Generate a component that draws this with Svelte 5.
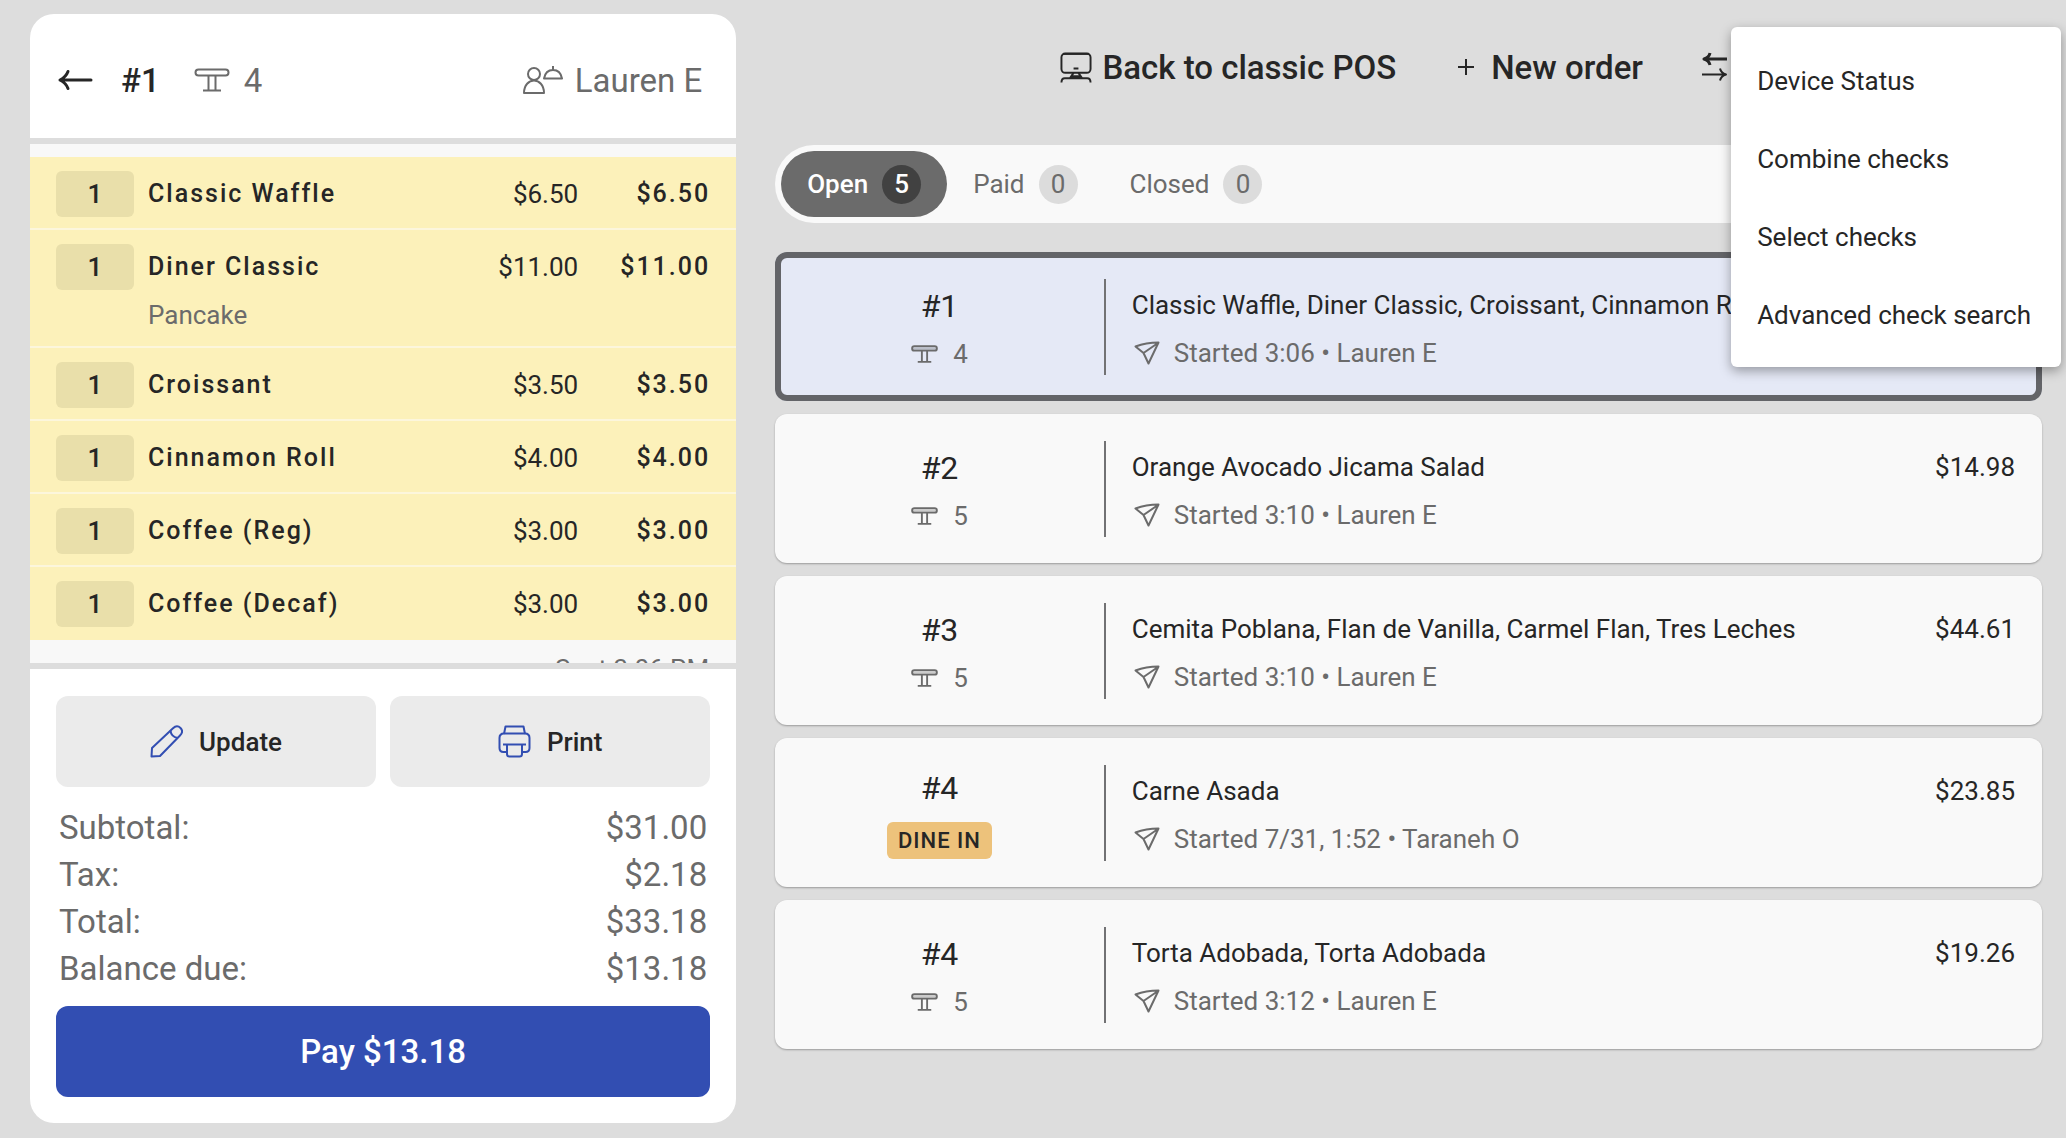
<script>
  const items = [
    { qty: 1, name: 'Classic Waffle', price: '$6.50', total: '$6.50' },
    { qty: 1, name: 'Diner Classic', price: '$11.00', total: '$11.00', mods: ['Pancake'] },
    { qty: 1, name: 'Croissant', price: '$3.50', total: '$3.50' },
    { qty: 1, name: 'Cinnamon Roll', price: '$4.00', total: '$4.00' },
    { qty: 1, name: 'Coffee (Reg)', price: '$3.00', total: '$3.00' },
    { qty: 1, name: 'Coffee (Decaf)', price: '$3.00', total: '$3.00' },
  ];

  const totals = [
    ['Subtotal:', '$31.00'],
    ['Tax:', '$2.18'],
    ['Total:', '$33.18'],
    ['Balance due:', '$13.18'],
  ];

  const tabs = [
    { label: 'Open', count: 5 },
    { label: 'Paid', count: 0 },
    { label: 'Closed', count: 0 },
  ];

  const checks = [
    {
      number: '#1',
      table: 4,
      summary: 'Classic Waffle, Diner Classic, Croissant, Cinnamon Roll',
      started: 'Started 3:06 • Lauren E',
    },
    {
      number: '#2',
      table: 5,
      summary: 'Orange Avocado Jicama Salad',
      started: 'Started 3:10 • Lauren E',
      amount: '$14.98',
    },
    {
      number: '#3',
      table: 5,
      summary: 'Cemita Poblana, Flan de Vanilla, Carmel Flan, Tres Leches',
      started: 'Started 3:10 • Lauren E',
      amount: '$44.61',
    },
    {
      number: '#4',
      tag: 'DINE IN',
      summary: 'Carne Asada',
      started: 'Started 7/31, 1:52 • Taraneh O',
      amount: '$23.85',
    },
    {
      number: '#4',
      table: 5,
      summary: 'Torta Adobada, Torta Adobada',
      started: 'Started 3:12 • Lauren E',
      amount: '$19.26',
    },
  ];

  const menu = ['Device Status', 'Combine checks', 'Select checks', 'Advanced check search'];

  let activeTab = $state(0);
  let selected = $state(0);
  let menuOpen = $state(true);
</script>

{#snippet tableIcon(small)}
  <svg class="table-icon" class:small viewBox="0 0 36 24" fill="none" stroke="currentColor" stroke-width={small ? 2.5 : 2}>
    <rect x="1.500" y="1.500" width="33" height="6" rx="3" fill={small ? 'rgba(0, 0, 0, 0.18)' : 'none'} />
    <path d="M14.500 7v15M21.500 7v15M9 22.500h18" />
  </svg>
{/snippet}

<div class="pos">
  <section class="order">
    <header>
      <button class="back" aria-label="Back">
        <svg width="36" height="24" viewBox="0 0 36 24" fill="none" stroke="currentColor" stroke-width="3" stroke-linecap="round" stroke-linejoin="round">
          <path d="M34 12H3M11 3.500Q9 9 3 12Q9 15 11 20.500" />
        </svg>
      </button>
      <strong>#1</strong>
      <span class="seat">{@render tableIcon(false)} 4</span>
      <span class="server">
        <svg width="40" height="30" viewBox="0 0 40 30" fill="none" stroke="currentColor" stroke-width="2" stroke-linejoin="round">
          <circle cx="11" cy="9" r="6" />
          <path d="M1 28C1 20 6 15.500 11 15.500S21 20 21 28Z" />
          <path d="M21 13.500C22 8 25.500 5 30 5S38 8 39 13.500ZM30 5V1" />
        </svg>
        Lauren E
      </span>
    </header>

    <div class="lines">
      <table>
        <tbody>
          {#each items as item}
            <tr>
              <td class="qty"><span>{item.qty}</span></td>
              <td class="name">
                <div>{item.name}</div>
                {#each item.mods ?? [] as mod}
                  <p>{mod}</p>
                {/each}
              </td>
              <td class="price">{item.price}</td>
              <td class="total">{item.total}</td>
            </tr>
          {/each}
        </tbody>
      </table>
      <p class="sent">Sent 3:06 PM</p>
    </div>

    <footer>
      <div class="actions">
        <button>
          <svg width="33" height="33" viewBox="0 0 33 33" fill="none" stroke="currentColor" stroke-width="2" stroke-linejoin="round">
            <path d="M1.500 31.500L2 23L23 3.200Q27 -0.500 30.500 3T30 10.500L10 31Z" />
            <path d="M20.500 5.500Q21 11.500 27.500 13" />
          </svg>
          Update
        </button>
        <button>
          <svg width="33" height="33" viewBox="0 0 33 33" fill="none" stroke="currentColor" stroke-width="2" stroke-linejoin="round">
            <path d="M6 9L7.500 1.500H25.500L27 9" />
            <path d="M8 27H5.500Q1.500 27 1.500 23V13Q1.500 8.500 6 8.500H27Q31.500 8.500 31.500 13V23Q31.500 27 27.500 27H25" />
            <path d="M5 19.500H28" />
            <path d="M9 19.500V29Q9 31.500 11.500 31.500H21.500Q24 31.500 24 29V19.500" />
          </svg>
          Print
        </button>
      </div>
      <dl>
        {#each totals as [label, value]}
          <div>
            <dt>{label}</dt>
            <dd>{value}</dd>
          </div>
        {/each}
      </dl>
      <button class="pay">Pay $13.18</button>
    </footer>
  </section>

  <main>
    <nav>
      <button>
        <svg width="32" height="33" viewBox="0 0 33 33" fill="none" stroke="currentColor" stroke-width="2">
          <rect x="1.500" y="2" width="30" height="20" rx="4" />
          <path d="M3 2.500H30" />
          <path d="M14 17.500h5M14 22L10.500 27M19 22L22.500 27M11 25.500h11M1.500 32Q1.500 27.500 5 27.500H28Q31.500 27.500 31.500 32" />
        </svg>
        Back to classic POS
      </button>
      <button class="new">
        <svg width="16" height="16" viewBox="0 0 16 16" fill="none" stroke="currentColor" stroke-width="2">
          <path d="M8 0V16M0 8H16" />
        </svg>
        New order
      </button>
      <button aria-label="Transfer" onclick={() => (menuOpen = !menuOpen)}>
        <svg width="26" height="32" viewBox="0 0 26 32" fill="none" stroke="currentColor" stroke-linejoin="round">
          <path stroke-width="3" d="M25 8H2M8 2Q7 6.500 2 8Q7 9.500 8 14" />
          <path stroke-width="2" d="M0 23.500H24M18 17.500Q19 22 24 23.500Q19 25 18 29.500" />
        </svg>
      </button>
    </nav>

    <div class="tabs" role="tablist">
      {#each tabs as tab, i}
        <button role="tab" aria-selected={activeTab === i} class:active={activeTab === i} onclick={() => (activeTab = i)}>
          {tab.label} <span>{tab.count}</span>
        </button>
      {/each}
    </div>

    <div class="checks">
      {#each checks as check, i}
        <button class="check" class:selected={selected === i} onclick={() => (selected = i)}>
          <span class="id">
            <span class="number">{check.number}</span>
            {#if check.tag}
              <span class="tag">{check.tag}</span>
            {:else}
              <span class="seat">{@render tableIcon(true)} {check.table}</span>
            {/if}
          </span>
          <span class="rule"></span>
          <span class="info">
            <span>{check.summary}</span>
            <span class="started">
              <svg width="26" height="24" viewBox="0 0 26 24" fill="none" stroke="currentColor" stroke-width="2" stroke-linejoin="round">
                <path d="M24.500 1.500L14.500 22.500L9.500 12L1.500 5.500Q12 1.500 24.500 1.500ZM9.500 12L24 2" />
              </svg>
              {check.started}
            </span>
          </span>
          {#if check.amount}
            <span class="amount">{check.amount}</span>
          {/if}
        </button>
      {/each}
    </div>
  </main>

  {#if menuOpen}
    <div class="menu" role="menu">
      {#each menu as entry}
        <button role="menuitem" onclick={() => (menuOpen = false)}>{entry}</button>
      {/each}
    </div>
  {/if}
</div>

<style>
  :global(body) {
    background: #ddd;
  }

  .pos {
    --dark: #262626;
    --gray: #6b6b6b;
    --blue: #324eb2;
    position: relative;
    display: flex;
    gap: 39px;
    box-sizing: border-box;
    height: 100vh;
    padding: 14px 24px 15px 30px;
    background: #ddd;
    color: var(--dark);
    font-family: Roboto, sans-serif;
    font-size: 26px;
    overflow: hidden;
  }

  button {
    display: flex;
    align-items: center;
    margin: 0;
    padding: 0;
    border: 0;
    background: none;
    color: inherit;
    font: inherit;
    cursor: pointer;
  }

  svg {
    flex: none;
  }

  p,
  dl,
  dd {
    margin: 0;
  }

  .table-icon {
    width: 36px;
    height: 24px;
  }
  .table-icon.small {
    width: 27px;
    height: 18px;
  }

  .order {
    flex: 0 0 35.1%;
    display: flex;
    flex-direction: column;
    gap: 6px;
    border-radius: 24px;
    overflow: hidden;
  }

  header {
    display: flex;
    align-items: center;
    height: 124px;
    box-sizing: border-box;
    padding: 8px 34px 0 27px;
    background: #fff;
    color: var(--gray);
    font-size: 33px;
  }
  header strong {
    margin: 0 34px 0 28px;
    color: var(--dark);
    font-weight: 500;
  }
  header .seat {
    gap: 14px;
  }
  .back {
    color: var(--dark);
  }
  .seat,
  .server {
    display: flex;
    align-items: center;
  }
  .server {
    gap: 12px;
    margin-left: auto;
  }

  .lines {
    flex: 1;
    min-height: 0;
    padding-top: 13px;
    background: #f8f8f8;
    overflow-y: auto;
    scrollbar-width: none;
  }

  table {
    width: 100%;
    border-spacing: 0;
    background: #fcf1ba;
    line-height: 46px;
  }
  td {
    padding: 14px 0 11px;
    border-bottom: 2px solid #fcf6dc;
    vertical-align: top;
  }
  tr:last-child td {
    border-color: #fcf1ba;
  }
  .qty {
    width: 78px;
    padding-left: 26px;
    font-weight: 500;
    text-align: center;
  }
  .qty span {
    display: block;
    border-radius: 6px;
    background: #e9dfaa;
  }
  .name {
    padding-left: 14px;
  }
  .name div,
  .total {
    font-size: 25px;
    font-weight: 500;
    letter-spacing: 2px;
  }
  .name p {
    margin: 10px 0 5px;
    color: var(--gray);
    line-height: 30px;
  }
  .price,
  .total {
    text-align: right;
  }
  .total {
    width: 132px;
    padding-right: 26px;
  }
  .sent {
    padding-right: 27px;
    color: var(--gray);
    line-height: 58px;
    text-align: right;
  }

  footer {
    padding: 27px 26px 26px;
    background: #fff;
  }
  .actions {
    display: flex;
    gap: 14px;
  }
  .actions button {
    flex: 1;
    justify-content: center;
    gap: 16px;
    height: 91px;
    border-radius: 12px;
    background: #ebebeb;
    font-weight: 500;
  }
  .actions svg {
    color: var(--blue);
  }
  dl {
    padding: 17px 3px 14px;
    color: var(--gray);
    font-size: 33px;
    line-height: 47px;
  }
  dl div {
    display: flex;
    justify-content: space-between;
  }
  .pay {
    justify-content: center;
    width: 100%;
    height: 91px;
    border-radius: 12px;
    background: var(--blue);
    color: #fff;
    font-size: 33px;
    font-weight: 500;
  }

  main {
    flex: 1;
    min-width: 0;
  }

  nav {
    display: flex;
    align-items: center;
    justify-content: flex-end;
    gap: 59px;
    height: 106px;
    padding-right: 314px;
    margin-bottom: 25px;
    font-size: 33px;
    font-weight: 500;
  }
  nav button {
    gap: 10px;
  }
  nav .new {
    gap: 17px;
    padding-left: 3px;
  }

  .tabs {
    display: flex;
    padding: 6px;
    margin-bottom: 29px;
    border-radius: 39px;
    background: #f9f9f9;
    color: var(--gray);
  }
  .tabs button {
    gap: 14px;
    height: 66px;
    padding: 0 26px;
    border-radius: 33px;
  }
  .tabs span {
    width: 39px;
    border-radius: 50%;
    background: #dcdcdc;
    line-height: 39px;
    text-align: center;
  }
  .tabs .active {
    background: #6b6b6b;
    color: #fff;
    font-weight: 500;
  }
  .active span {
    background: #414141;
  }

  .checks {
    display: flex;
    flex-direction: column;
    gap: 13px;
  }
  .check {
    min-height: 149px;
    padding-right: 27px;
    border-radius: 12px;
    background: #f9f9f9;
    box-shadow: 0 1px 2px rgba(0, 0, 0, 0.3);
    line-height: 48px;
    text-align: left;
  }
  .check.selected {
    background: #e5e9f6;
    box-shadow: inset 0 0 0 6px #636468;
  }
  .id {
    flex: 0 0 26.5%;
    display: flex;
    flex-direction: column;
    align-items: center;
  }
  .number {
    margin-top: 6px;
    font-size: 32px;
  }
  .check .seat {
    gap: 15px;
    color: var(--gray);
  }
  .tag {
    margin: 10px 0 8px;
    padding: 0 11px;
    border-radius: 6px;
    background: #edc27b;
    font-size: 22px;
    font-weight: 500;
    letter-spacing: 1px;
    line-height: 37px;
  }
  .rule {
    width: 2px;
    height: 96px;
    background: #727274;
  }
  .info {
    flex: 1;
    min-width: 0;
    display: flex;
    flex-direction: column;
    padding: 5px 0 0 26px;
    white-space: nowrap;
  }
  .started {
    display: flex;
    align-items: center;
    gap: 14px;
    padding-left: 2px;
    color: var(--gray);
  }
  .amount {
    align-self: flex-start;
    padding-top: 29px;
  }

  .menu {
    position: absolute;
    top: 27px;
    right: 5px;
    padding: 15px 0 13px;
    border-radius: 6px;
    background: #fff;
    box-shadow: 0 4px 12px rgba(0, 0, 0, 0.35);
  }
  .menu button {
    width: 100%;
    height: 78px;
    padding: 0 30px 0 26px;
  }
</style>
